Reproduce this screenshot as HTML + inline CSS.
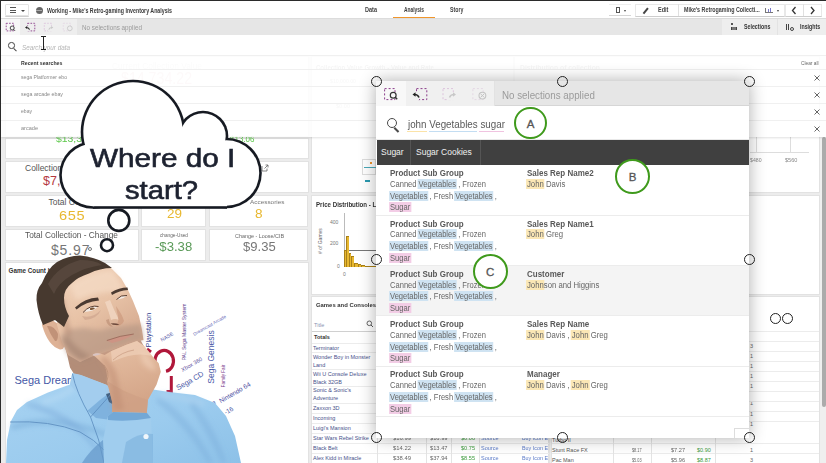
<!DOCTYPE html>
<html><head><meta charset="utf-8">
<style>
*{margin:0;padding:0;box-sizing:border-box}
html,body{width:826px;height:463px;overflow:hidden;background:#fff;font-family:"Liberation Sans",sans-serif;color:#404040}
.a{position:absolute}
#root{position:relative;width:826px;height:463px;overflow:hidden;background:#fff}
.t{position:absolute;white-space:nowrap;line-height:1;transform-origin:0 0}
.b{font-weight:bold}
</style></head><body><div id="root">

<!-- ===== DASHBOARD (background) ===== -->
<!-- DASH START -->
<div id="dash" class="a" style="left:0;top:0;width:826px;height:463px">
<div class="a" style="left:1px;top:55px;width:825px;height:408px;background:#ececec;"></div>
<div class="a" style="left:4.5px;top:56px;width:304px;height:81px;background:#fff;border:1px solid #e2e2e2;"></div>
<div class="a" style="left:311px;top:56px;width:203px;height:137px;background:#fff;border:1px solid #e2e2e2;"></div>
<div class="a" style="left:514px;top:56px;width:306px;height:137px;background:#fff;border:1px solid #e2e2e2;"></div>
<div class="a" style="left:4.5px;top:138px;width:150px;height:21px;background:#fff;border:1px solid #e2e2e2;"></div>
<div class="a" style="left:156.5px;top:138px;width:152px;height:21px;background:#fff;border:1px solid #e2e2e2;"></div>
<div class="a" style="left:4.5px;top:160.5px;width:150px;height:32px;background:#fff;border:1px solid #e2e2e2;"></div>
<div class="a" style="left:156.5px;top:160.5px;width:152px;height:32px;background:#fff;border:1px solid #e2e2e2;"></div>
<div class="a" style="left:4.5px;top:194.5px;width:134.2px;height:32px;background:#fff;border:1px solid #e2e2e2;"></div>
<div class="a" style="left:140.8px;top:194.5px;width:65.6px;height:32px;background:#fff;border:1px solid #e2e2e2;"></div>
<div class="a" style="left:209px;top:194.5px;width:99.3px;height:32px;background:#fff;border:1px solid #e2e2e2;"></div>
<div class="a" style="left:4.5px;top:228.5px;width:134.2px;height:32px;background:#fff;border:1px solid #e2e2e2;"></div>
<div class="a" style="left:140.8px;top:228.5px;width:65.6px;height:32px;background:#fff;border:1px solid #e2e2e2;"></div>
<div class="a" style="left:209px;top:228.5px;width:99.3px;height:32px;background:#fff;border:1px solid #e2e2e2;"></div>
<div class="a" style="left:4.5px;top:262px;width:304px;height:210px;background:#fff;border:1px solid #e2e2e2;"></div>
<div class="a" style="left:311px;top:194.5px;width:206px;height:100px;background:#fff;border:1px solid #e2e2e2;"></div>
<div class="a" style="left:519px;top:194.5px;width:301px;height:100px;background:#fff;border:1px solid #e2e2e2;"></div>
<div class="a" style="left:311px;top:296px;width:238px;height:180px;background:#fff;border:1px solid #e2e2e2;"></div>
<div class="a" style="left:551px;top:296px;width:269px;height:180px;background:#fff;border:1px solid #e2e2e2;"></div>
<div class="a" style="left:820px;top:55px;width:6px;height:408px;background:#efefef;"></div>
<div class="a" style="left:822px;top:137px;width:4px;height:269.5px;background:#ababab;border-radius:2px"></div>
<div class="t" style="left:112px;top:61.4px;font-size:9.5px;color:#d6d6d6;transform:scaleX(0.880);">Current Collection Value</div>
<div class="t" style="left:121px;top:71.1px;font-size:16px;color:#e6c4c6;transform:scaleX(0.887);">$14,734.22</div>
<div class="t" style="left:316px;top:63.7px;font-size:7px;color:#9a9a9a;font-weight:bold;transform:scaleX(0.864);">Collection Value Growth - Value and Rate</div>
<div class="t" style="left:520px;top:63.7px;font-size:7px;color:#9a9a9a;font-weight:bold;transform:scaleX(0.970);">Distribution of collection</div>
<div class="t" style="left:330px;top:77.8px;font-size:6px;color:#aaa;transform:scaleX(0.866);">$10,000.00</div>
<div class="t" style="left:336px;top:103.3px;font-size:6px;color:#aaa;transform:scaleX(0.932);">$0.00</div>
<div class="t" style="left:56.2px;top:134.5px;font-size:9px;color:#5cc84a;transform:scaleX(1.154);">$13,334.16</div>
<div class="t" style="left:229.7px;top:134.7px;font-size:9px;color:#5cc84a;transform:scaleX(0.890);">$13.06</div>
<div class="t" style="left:25px;top:163.7px;font-size:8.5px;color:#555;">Collection Value - Loose</div>
<div class="t" style="left:43px;top:175.3px;font-size:12.5px;color:#b5383e;">$7,394.83</div>
<div class="t" style="left:48.5px;top:198.3px;font-size:8.5px;color:#555;">Total Collection - Games</div>
<div class="t" style="left:59.3px;top:209.8px;font-size:12.8px;color:#e8b830;transform:scaleX(1.142);letter-spacing:0.5px">655</div>
<div class="t" style="left:166.8px;top:207.8px;font-size:12px;color:#e8b830;transform:scaleX(1.123);">29</div>
<div class="t" style="left:249.6px;top:198.6px;font-size:6px;color:#777;transform:scaleX(1.064);">Accessories</div>
<div class="t" style="left:255.4px;top:207.8px;font-size:12px;color:#e8b830;transform:scaleX(1.136);">8</div>
<div class="t" style="left:25.3px;top:231.3px;font-size:8.5px;color:#555;transform:scaleX(0.979);">Total Collection - Change</div>
<div class="t" style="left:50.9px;top:242.7px;font-size:14px;color:#777;letter-spacing:0.9px">$5.97</div>
<div class="t" style="left:160px;top:233.4px;font-size:5px;color:#666;transform:scaleX(0.941);">change-Used</div>
<div class="t" style="left:154.8px;top:239.8px;font-size:13.7px;color:#5a9a58;transform:scaleX(0.958);">-$3.38</div>
<div class="t" style="left:234.7px;top:233.3px;font-size:6px;color:#666;transform:scaleX(0.901);">Change - Loose/CIB</div>
<div class="t" style="left:242.7px;top:239.8px;font-size:13.7px;color:#777;transform:scaleX(0.954);">$9.35</div>
<div class="t" style="left:8.5px;top:267.9px;font-size:6.3px;color:#333;font-weight:bold;">Game Count by Console</div>
<div class="t" style="left:315.7px;top:200.6px;font-size:7px;color:#333;font-weight:bold;transform:scaleX(0.876);">Price Distribution - L</div>
<div class="t" style="left:330px;top:220.4px;font-size:5px;color:#777;">400</div>
<div class="t" style="left:330px;top:241.4px;font-size:5px;color:#777;">200</div>
<div class="t" style="left:337px;top:263.9px;font-size:5px;color:#777;">0</div>
<div class="t" style="left:343px;top:272.4px;font-size:5px;color:#777;">0</div>
<div class="t" style="left:316px;top:302.3px;font-size:6px;color:#333;font-weight:bold;transform:scaleX(0.983);">Games and Consoles</div>
<div class="t" style="left:314px;top:323.4px;font-size:5.5px;color:#8890b0;">Title</div>
<div class="t" style="left:314px;top:334.9px;font-size:5.5px;color:#333;font-weight:bold;">Totals</div>
<div class="t" style="left:749.5px;top:157.9px;font-size:5px;color:#888;transform:scaleX(1.034);">$480</div>
<div class="t" style="left:784.6px;top:157.9px;font-size:5px;color:#888;transform:scaleX(1.115);">$560</div>
<div class="t" style="left:14.5px;top:374.7px;font-size:11px;color:#4457a6;">Sega Dreamcast</div>
<div class="t" style="left:313px;top:345.9px;font-size:5.5px;color:#46508a;">Terminator</div>
<div class="t" style="left:313px;top:354.9px;font-size:5.5px;color:#46508a;">Wonder Boy in Monster</div>
<div class="t" style="left:313px;top:362.9px;font-size:5.5px;color:#46508a;">Land</div>
<div class="t" style="left:313px;top:371.9px;font-size:5.5px;color:#46508a;">Wii U Console Deluxe</div>
<div class="t" style="left:313px;top:379.9px;font-size:5.5px;color:#46508a;">Black 32GB</div>
<div class="t" style="left:313px;top:388.4px;font-size:5.5px;color:#46508a;">Sonic &amp; Sonic&#x27;s</div>
<div class="t" style="left:313px;top:396.4px;font-size:5.5px;color:#46508a;">Adventure</div>
<div class="t" style="left:313px;top:405.9px;font-size:5.5px;color:#46508a;">Zaxxon 3D</div>
<div class="t" style="left:313px;top:415.9px;font-size:5.5px;color:#46508a;">Incoming</div>
<div class="t" style="left:313px;top:425.9px;font-size:5.5px;color:#46508a;">Luigi&#x27;s Mansion</div>
<div class="t" style="left:313px;top:435.9px;font-size:5.5px;color:#46508a;">Star Wars Rebel Strike</div>
<div class="t" style="left:313px;top:445.9px;font-size:5.5px;color:#46508a;">Black Belt</div>
<div class="t" style="left:313px;top:455.9px;font-size:5.5px;color:#46508a;">Alex Kidd in Miracle</div>
<div class="t" style="left:393px;top:436.4px;font-size:5.5px;color:#666;transform:scaleX(1.070);">$16.99</div>
<div class="t" style="left:430px;top:436.4px;font-size:5.5px;color:#666;transform:scaleX(1.040);">$16.99</div>
<div class="t" style="left:461px;top:436.4px;font-size:5.5px;color:#3b9a3b;transform:scaleX(1.017);">$0.00</div>
<div class="t" style="left:480.6px;top:436.4px;font-size:5.5px;color:#5a7ac8;transform:scaleX(1.004);">Source</div>
<div class="t" style="left:522px;top:436.4px;font-size:5.5px;color:#5a7ac8;transform:scaleX(0.977);">Buy Icon E</div>
<div class="t" style="left:393px;top:446.4px;font-size:5.5px;color:#666;transform:scaleX(1.070);">$14.22</div>
<div class="t" style="left:430px;top:446.4px;font-size:5.5px;color:#666;transform:scaleX(1.040);">$13.47</div>
<div class="t" style="left:461px;top:446.4px;font-size:5.5px;color:#3b9a3b;transform:scaleX(1.017);">$0.75</div>
<div class="t" style="left:480.6px;top:446.4px;font-size:5.5px;color:#5a7ac8;transform:scaleX(1.004);">Source</div>
<div class="t" style="left:522px;top:446.4px;font-size:5.5px;color:#5a7ac8;transform:scaleX(0.977);">Buy Icon E</div>
<div class="t" style="left:393px;top:456.4px;font-size:5.5px;color:#666;transform:scaleX(1.070);">$38.49</div>
<div class="t" style="left:430px;top:456.4px;font-size:5.5px;color:#666;transform:scaleX(1.040);">$37.94</div>
<div class="t" style="left:461px;top:456.4px;font-size:5.5px;color:#3b9a3b;transform:scaleX(1.017);">$8.55</div>
<div class="t" style="left:480.6px;top:456.4px;font-size:5.5px;color:#5a7ac8;transform:scaleX(1.004);">Source</div>
<div class="t" style="left:522px;top:456.4px;font-size:5.5px;color:#5a7ac8;transform:scaleX(0.977);">Buy Icon E</div>
<div class="t" style="left:552px;top:437.9px;font-size:5.5px;color:#555;">Turbo II</div>
<div class="t" style="left:552px;top:447.9px;font-size:5.5px;color:#555;">Stunt Race FX</div>
<div class="t" style="left:552px;top:457.9px;font-size:5.5px;color:#555;">Pac Man</div>
<div class="t" style="left:631.7px;top:447.9px;font-size:5.5px;color:#666;transform:scaleX(0.690);">$8.17</div>
<div class="t" style="left:671px;top:447.9px;font-size:5.5px;color:#666;transform:scaleX(1.017);">$7.27</div>
<div class="t" style="left:697px;top:447.9px;font-size:5.5px;color:#3b9a3b;">$0.90</div>
<div class="t" style="left:631.7px;top:457.9px;font-size:5.5px;color:#666;transform:scaleX(0.690);">$5.03</div>
<div class="t" style="left:671px;top:457.9px;font-size:5.5px;color:#666;transform:scaleX(1.017);">$5.96</div>
<div class="t" style="left:697px;top:457.9px;font-size:5.5px;color:#3b9a3b;">$8.87</div>
<div class="t" style="left:750px;top:344.4px;font-size:5.5px;color:#666;">3</div>
<div class="t" style="left:750px;top:354.4px;font-size:5.5px;color:#666;">1</div>
<div class="t" style="left:750px;top:364.4px;font-size:5.5px;color:#666;">1</div>
<div class="t" style="left:750px;top:374.4px;font-size:5.5px;color:#666;">1</div>
<div class="t" style="left:750px;top:384.4px;font-size:5.5px;color:#666;">1</div>
<div class="t" style="left:750px;top:401.4px;font-size:5.5px;color:#666;">1</div>
<div class="t" style="left:750px;top:411.9px;font-size:5.5px;color:#666;">1</div>
<div class="t" style="left:750px;top:421.9px;font-size:5.5px;color:#666;">1</div>
<div class="t" style="left:750px;top:447.9px;font-size:5.5px;color:#666;">1</div>
<div class="t" style="left:750px;top:457.9px;font-size:5.5px;color:#666;">3</div>
<div class="a" style="left:148px;top:329.5px;width:0;height:0"><div class="t" style="left:0;top:0;font-size:7px;color:#2e3c8e;transform:translate(-50%,-50%) rotate(-90deg);transform-origin:50% 50%;">Playstation</div></div>
<div class="a" style="left:167px;top:336.5px;width:0;height:0"><div class="t" style="left:0;top:0;font-size:5px;color:#5a5aa8;transform:translate(-50%,-50%) rotate(-30deg);transform-origin:50% 50%;">NASE</div></div>
<div class="a" style="left:183.6px;top:331.7px;width:0;height:0"><div class="t" style="left:0;top:0;font-size:5px;color:#5a3a8a;transform:translate(-50%,-50%) rotate(-90deg);transform-origin:50% 50%;">PAL Sega Master System</div></div>
<div class="a" style="left:210px;top:326px;width:0;height:0"><div class="t" style="left:0;top:0;font-size:4.5px;color:#6a6ab8;transform:translate(-50%,-50%) rotate(-30deg);transform-origin:50% 50%;">Dreamcast Arcade</div></div>
<div class="a" style="left:211px;top:357px;width:0;height:0"><div class="t" style="left:0;top:0;font-size:8.5px;color:#4a5aa8;transform:translate(-50%,-50%) rotate(-90deg);transform-origin:50% 50%;">Sega Genesis</div></div>
<div class="a" style="left:191.8px;top:365px;width:0;height:0"><div class="t" style="left:0;top:0;font-size:5.5px;color:#5a4a9a;transform:translate(-50%,-50%) rotate(-30deg);transform-origin:50% 50%;">Xbox 360</div></div>
<div class="a" style="left:190.4px;top:380.5px;width:0;height:0"><div class="t" style="left:0;top:0;font-size:7.5px;color:#4a5aa8;transform:translate(-50%,-50%) rotate(-30deg);transform-origin:50% 50%;">Sega CD</div></div>
<div class="a" style="left:223.6px;top:376px;width:0;height:0"><div class="t" style="left:0;top:0;font-size:4.5px;color:#7a3a8a;transform:translate(-50%,-50%) rotate(-90deg);transform-origin:50% 50%;">Family Fair</div></div>
<div class="a" style="left:234.5px;top:392.7px;width:0;height:0"><div class="t" style="left:0;top:0;font-size:6.5px;color:#4a4aa0;transform:translate(-50%,-50%) rotate(-30deg);transform-origin:50% 50%;">Nintendo 64</div></div>
<div class="a" style="left:229px;top:411px;width:0;height:0"><div class="t" style="left:0;top:0;font-size:6.5px;color:#4a5aa8;transform:translate(-50%,-50%) rotate(-30deg);transform-origin:50% 50%;">-16</div></div>
<div class="a" style="left:213.6px;top:403px;width:0;height:0"><div class="t" style="left:0;top:0;font-size:6.5px;color:#4a5aa8;transform:translate(-50%,-50%) rotate(-30deg);transform-origin:50% 50%;">e</div></div>
<svg class="a" style="left:0;top:0" width="826" height="463"><path d="M156,366 A9.3,10.5 0 1 1 166,371.3" fill="none" stroke="#b0173a" stroke-width="3.2"/><path d="M171.3,376 L171.3,391.5 L166.5,391.5" fill="none" stroke="#b0173a" stroke-width="3"/><path d="M147,349 L151,352" stroke="#b0173a" stroke-width="3"/></svg>
<div class="a" style="left:343.7px;top:212.6px;width:1px;height:54.6px;background:#bbb"></div>
<div class="a" style="left:343.5px;top:250px;width:2.8px;height:17.19999999999999px;background:#e8b830;border-left:0.5px solid #a8801a;border-top:0.5px solid #a8801a"></div>
<div class="a" style="left:346.1px;top:235.7px;width:2.8px;height:31.5px;background:#e8b830;border-left:0.5px solid #a8801a;border-top:0.5px solid #a8801a"></div>
<div class="a" style="left:348.7px;top:252.5px;width:2.3px;height:14.699999999999989px;background:#e8b830;border-left:0.5px solid #a8801a;border-top:0.5px solid #a8801a"></div>
<div class="a" style="left:350.8px;top:256.4px;width:3.3px;height:10.800000000000011px;background:#e8b830;border-left:0.5px solid #a8801a;border-top:0.5px solid #a8801a"></div>
<div class="a" style="left:353.9px;top:263.4px;width:3.8px;height:3.8000000000000114px;background:#e8b830;border-left:0.5px solid #a8801a;border-top:0.5px solid #a8801a"></div>
<div class="a" style="left:357.5px;top:264.2px;width:3.6px;height:3.0px;background:#e8b830;border-left:0.5px solid #a8801a;border-top:0.5px solid #a8801a"></div>
<div class="a" style="left:360.9px;top:265px;width:4.1px;height:2.1999999999999886px;background:#e8b830;border-left:0.5px solid #a8801a;border-top:0.5px solid #a8801a"></div>
<div class="a" style="left:364.8px;top:265.8px;width:11px;height:1.3999999999999773px;background:#e8b830;border-left:0.5px solid #a8801a;border-top:0.5px solid #a8801a"></div>
<div class="a" style="left:349px;top:250px;width:27px;height:1px;background:#777"></div>
<div class="t" style="left:318px;top:254px;font-size:5px;color:#666;transform:rotate(-90deg)"># of Games</div>
<div class="a" style="left:362px;top:158.5px;width:14px;height:16px;border:1px solid #ddd;background:#fff"></div>
<div class="a" style="left:364px;top:167px;width:12px;height:1px;background:#4aa8b8"></div>
<div class="a" style="left:370px;top:162px;width:2px;height:2px;background:#f0962c"></div>
<div class="a" style="left:365px;top:180px;width:5px;height:2px;background:#2a9ab0"></div>
<div class="a" style="left:750px;top:152px;width:59px;height:1px;background:#ddd"></div>
<div class="a" style="left:755.5px;top:137px;width:1px;height:15px;background:#ddd"></div>
<div class="a" style="left:790.4px;top:137px;width:1px;height:15px;background:#ddd"></div>
<div class="a" style="left:769.5px;top:313px;width:11px;height:11px;border:1.2px solid #222;border-radius:50%"></div>
<div class="a" style="left:781.5px;top:313px;width:11px;height:11px;border:1.2px solid #222;border-radius:50%"></div>
<div class="a" style="left:312px;top:331px;width:237px;height:1px;background:#ececec"></div>
<div class="a" style="left:312px;top:343px;width:237px;height:1px;background:#ececec"></div>
<div class="a" style="left:312px;top:352px;width:237px;height:1px;background:#ececec"></div>
<div class="a" style="left:312px;top:369px;width:237px;height:1px;background:#ececec"></div>
<div class="a" style="left:312px;top:386px;width:237px;height:1px;background:#ececec"></div>
<div class="a" style="left:312px;top:403px;width:237px;height:1px;background:#ececec"></div>
<div class="a" style="left:312px;top:413px;width:237px;height:1px;background:#ececec"></div>
<div class="a" style="left:312px;top:423px;width:237px;height:1px;background:#ececec"></div>
<div class="a" style="left:312px;top:433px;width:237px;height:1px;background:#ececec"></div>
<div class="a" style="left:312px;top:443px;width:237px;height:1px;background:#ececec"></div>
<div class="a" style="left:312px;top:453px;width:237px;height:1px;background:#ececec"></div>
<div class="a" style="left:312px;top:331px;width:237px;height:1px;background:#d0d0d0"></div>
<div class="a" style="left:552px;top:331px;width:267px;height:1px;background:#ececec"></div>
<div class="a" style="left:552px;top:341px;width:267px;height:1px;background:#ececec"></div>
<div class="a" style="left:552px;top:351px;width:267px;height:1px;background:#ececec"></div>
<div class="a" style="left:552px;top:361px;width:267px;height:1px;background:#ececec"></div>
<div class="a" style="left:552px;top:371px;width:267px;height:1px;background:#ececec"></div>
<div class="a" style="left:552px;top:381px;width:267px;height:1px;background:#ececec"></div>
<div class="a" style="left:552px;top:391px;width:267px;height:1px;background:#ececec"></div>
<div class="a" style="left:552px;top:401px;width:267px;height:1px;background:#ececec"></div>
<div class="a" style="left:552px;top:411px;width:267px;height:1px;background:#ececec"></div>
<div class="a" style="left:552px;top:421px;width:267px;height:1px;background:#ececec"></div>
<div class="a" style="left:552px;top:443px;width:267px;height:1px;background:#ececec"></div>
<div class="a" style="left:552px;top:453px;width:267px;height:1px;background:#ececec"></div>
<div class="a" style="left:377.3px;top:438px;width:1px;height:25px;background:#e4e4e4"></div>
<div class="a" style="left:425.7px;top:438px;width:1px;height:25px;background:#e4e4e4"></div>
<div class="a" style="left:451px;top:438px;width:1px;height:25px;background:#e4e4e4"></div>
<div class="a" style="left:479px;top:438px;width:1px;height:25px;background:#e4e4e4"></div>
<div class="a" style="left:549px;top:438px;width:1px;height:25px;background:#e4e4e4"></div>
<div class="a" style="left:612.7px;top:438px;width:1px;height:25px;background:#e4e4e4"></div>
<div class="a" style="left:650.7px;top:438px;width:1px;height:25px;background:#e4e4e4"></div>
<div class="a" style="left:714.7px;top:438px;width:1px;height:25px;background:#e4e4e4"></div>
<svg class="a" style="left:366px;top:320px" width="8" height="8"><circle cx="3.3" cy="3.3" r="2.3" fill="none" stroke="#555" stroke-width="0.9"/><path d="M5,5 L7,7" stroke="#555" stroke-width="1"/></svg>
<div class="a" style="left:87.6px;top:246.5px;width:4.4px;height:4.4px;border:1px solid #777;border-radius:50%"></div>
<svg class="a" style="left:261px;top:164px" width="8" height="8"><path d="M1,2 L1,7 L6,7 L6,4.5 M3.5,4.5 L7,1 M4.5,1 L7,1 L7,3.5" fill="none" stroke="#666" stroke-width="0.8"/></svg>
<div class="a" style="left:1px;top:55px;width:825px;height:82px;background:rgba(255,255,255,0.9);box-shadow:0 1px 2px rgba(0,0,0,0.12)"></div>
<div class="a" style="left:1px;top:68.5px;width:825px;height:1px;background:#f0f0f0"></div>
<div class="a" style="left:1px;top:85.6px;width:825px;height:1px;background:#f0f0f0"></div>
<div class="a" style="left:1px;top:102.5px;width:825px;height:1px;background:#f0f0f0"></div>
<div class="a" style="left:1px;top:119.5px;width:825px;height:1px;background:#f0f0f0"></div>
<div class="t" style="left:20.6px;top:59.8px;font-size:6px;color:#333;font-weight:bold;transform:scaleX(0.868);">Recent searches</div>
<div class="t" style="left:20.6px;top:73.8px;font-size:6px;color:#888;transform:scaleX(0.851);">sega Platformer ebo</div>
<div class="t" style="left:20.6px;top:90.8px;font-size:6px;color:#888;transform:scaleX(0.880);">sega arcade ebay</div>
<div class="t" style="left:20.6px;top:107.8px;font-size:6px;color:#888;transform:scaleX(0.845);">ebay</div>
<div class="t" style="left:20.6px;top:124.8px;font-size:6px;color:#888;transform:scaleX(0.926);">arcade</div>
<div class="t" style="left:801px;top:60.0px;font-size:6px;color:#666;transform:scaleX(0.795);">Clear all</div>
<svg class="a" style="left:813.5px;top:74.7px" width="6" height="6"><path d="M0.5,0.5 L5.5,5.5 M5.5,0.5 L0.5,5.5" stroke="#555" stroke-width="0.9"/></svg>
<svg class="a" style="left:813.5px;top:91.9px" width="6" height="6"><path d="M0.5,0.5 L5.5,5.5 M5.5,0.5 L0.5,5.5" stroke="#555" stroke-width="0.9"/></svg>
<svg class="a" style="left:813.5px;top:109.0px" width="6" height="6"><path d="M0.5,0.5 L5.5,5.5 M5.5,0.5 L0.5,5.5" stroke="#555" stroke-width="0.9"/></svg>
<svg class="a" style="left:813.5px;top:126.30000000000001px" width="6" height="6"><path d="M0.5,0.5 L5.5,5.5 M5.5,0.5 L0.5,5.5" stroke="#555" stroke-width="0.9"/></svg>
</div>
<!-- DASH END -->

<!-- ===== HEADER ===== -->
<div class="a" style="left:0;top:0;width:826px;height:18px;background:#fff"></div>
<div class="a" style="left:0;top:0;width:826px;height:1px;background:#2b2b2b"></div>
<div class="a" style="left:0;top:0;width:1.3px;height:463px;background:#2b2b2b;z-index:50"></div>
<div class="a" style="left:1px;top:18px;width:825px;height:1px;background:#dcdcdc"></div>
<!-- hamburger btn -->
<div class="a" style="left:5px;top:4px;width:24px;height:12px;border:1px solid #e3e3e3;border-radius:1px;box-shadow:0 1px 0 #cfcfcf"></div>
<div class="a" style="left:10px;top:7px;width:6px;height:1px;background:#555"></div>
<div class="a" style="left:10px;top:9.5px;width:6px;height:1px;background:#555"></div>
<div class="a" style="left:10px;top:12px;width:6px;height:1px;background:#555"></div>
<div class="a" style="left:20.5px;top:9.5px;width:0;height:0;border-left:2px solid transparent;border-right:2px solid transparent;border-top:2.5px solid #444"></div>
<!-- globe -->
<div class="a" style="left:35.5px;top:6.5px;width:7px;height:7px;border-radius:50%;background:#666"></div>
<div class="a" style="left:36px;top:9.5px;width:6px;height:1px;background:#aaa"></div>
<div class="t b" style="left:47px;top:7px;font-size:7px;color:#3a3a3a;transform:scaleX(0.75)">Working - Mike's Retro-gaming Inventory Analysis</div>
<!-- tabs -->
<div class="t b" style="left:365px;top:6.5px;font-size:6.5px;color:#404040;transform:scaleX(0.85)">Data</div>
<div class="t b" style="left:404px;top:6.5px;font-size:6.5px;color:#404040;transform:scaleX(0.75)">Analysis</div>
<div class="t b" style="left:450px;top:6.5px;font-size:6.5px;color:#404040;transform:scaleX(0.8)">Story</div>
<div class="a" style="left:393px;top:16.5px;width:42px;height:1.5px;background:#f0962c"></div>
<!-- right buttons -->
<div class="a" style="left:609px;top:4px;width:22px;height:12px;border-bottom:1px solid #d5d5d5;border-top:1px solid #eee"></div>
<div class="a" style="left:616px;top:6.5px;width:4px;height:6px;border:1px solid #555"></div>
<div class="a" style="left:623.5px;top:9.5px;width:0;height:0;border-left:1.5px solid transparent;border-right:1.5px solid transparent;border-top:2px solid #444"></div>
<div class="a" style="left:635px;top:4px;width:150px;height:12.5px;border:1px solid #e8e8e8;border-bottom:1px solid #cdcdcd"></div>
<div class="a" style="left:678px;top:4px;width:1px;height:12px;background:#e0e0e0"></div>
<div class="a" style="left:642px;top:10px;width:7px;height:1.5px;background:#444;transform:rotate(-50deg)"></div>
<div class="t b" style="left:658px;top:7px;font-size:6.5px;color:#444;transform:scaleX(0.85)">Edit</div>
<div class="t b" style="left:684px;top:7px;font-size:6.5px;color:#404040;transform:scaleX(0.82)">Mike's Retrogaming Collecti...</div>
<div class="a" style="left:765px;top:8px;width:8px;height:5px;border-left:1px solid #777;border-bottom:1px solid #777"></div>
<div class="a" style="left:768px;top:9px;width:1px;height:3px;background:#7a7acc"></div>
<div class="a" style="left:770px;top:8px;width:1px;height:4px;background:#7a7acc"></div>
<div class="a" style="left:777px;top:9.5px;width:0;height:0;border-left:1.5px solid transparent;border-right:1.5px solid transparent;border-top:2px solid #444"></div>
<div class="a" style="left:785px;top:4px;width:37px;height:12.5px;border:1px solid #e8e8e8;border-bottom:1px solid #cdcdcd"></div>
<div class="a" style="left:803px;top:4px;width:1px;height:12px;background:#e0e0e0"></div>
<svg class="a" style="left:790px;top:6px" width="30" height="9"><path d="M5.5,1 L2.5,4.5 L5.5,8" fill="none" stroke="#333" stroke-width="1.3"/><path d="M21,1 L24,4.5 L21,8" fill="none" stroke="#333" stroke-width="1.3"/></svg>

<!-- ===== TOOLBAR ===== -->
<div class="a" style="left:1px;top:19px;width:825px;height:16px;background:#e6e6e6"></div>
<div class="a" style="left:1px;top:19px;width:19px;height:16px;background:#f7f7f7"></div>
<div class="a" style="left:20px;top:19px;width:57px;height:16px;background:#eeeeee"></div>
<div class="a" style="left:722px;top:19px;width:104px;height:16px;background:#eeeeee"></div>
<div class="a" style="left:777px;top:19px;width:1px;height:16px;background:#e3e3e3"></div>
<!-- icons -->
<svg class="a" style="left:0;top:19px" width="80" height="16" viewBox="0 0 80 16">
  <rect x="6.2" y="4.3" width="7.4" height="7.6" fill="none" stroke="#8b3d8b" stroke-width="0.9" stroke-dasharray="1.6 1.3"/>
  <circle cx="12.2" cy="9" r="2" fill="#f7f7f7" stroke="#333" stroke-width="0.9"/>
  <path d="M13.6,10.4 L15,11.8" stroke="#333" stroke-width="1"/>
  <rect x="27.6" y="4.3" width="7.2" height="7.6" fill="none" stroke="#8b3d8b" stroke-width="0.9" stroke-dasharray="1.6 1.3"/>
  <rect x="24.5" y="6.8" width="5" height="5.5" fill="#eeeeee"/>
  <path d="M29.5,10.6 Q29,8.5 26.5,8.5" fill="none" stroke="#222" stroke-width="1.1"/>
  <path d="M25,8.5 L27.2,6.9 L27.2,10.1 Z" fill="#222"/>
  <rect x="44.3" y="4.3" width="7.2" height="7.6" fill="none" stroke="#dcc4dc" stroke-width="0.9" stroke-dasharray="1.6 1.3"/>
  <rect x="48" y="6.8" width="5.5" height="5.5" fill="#eeeeee"/>
  <path d="M48.8,10.6 Q49.3,8.5 51.8,8.5" fill="none" stroke="#c8c8c8" stroke-width="1.1"/>
  <path d="M53.3,8.5 L51.1,6.9 L51.1,10.1 Z" fill="#c8c8c8"/>
  <rect x="63.3" y="4.3" width="7.2" height="7.6" fill="none" stroke="#e4d8e4" stroke-width="0.9" stroke-dasharray="1.6 1.3"/>
  <circle cx="69.8" cy="9.3" r="2.4" fill="#eeeeee" stroke="#c4c4c4" stroke-width="0.8"/>
</svg>
<div class="t" style="left:82px;top:24px;font-size:7px;color:#9a9a9a;transform:scaleX(0.9)">No selections applied</div>
<!-- selections icon -->
<div class="a" style="left:731px;top:23px;width:1.5px;height:2px;background:#555"></div>
<div class="a" style="left:731px;top:27px;width:6px;height:3px;border-left:1.5px solid #444;border-right:1.5px solid #444;background:#777"></div>
<div class="t b" style="left:744px;top:24px;font-size:6.5px;color:#333;transform:scaleX(0.81)">Selections</div>
<div class="a" style="left:786px;top:23.5px;width:1px;height:6px;background:#444"></div>
<div class="a" style="left:788px;top:23.5px;width:1px;height:6px;background:#444"></div>
<div class="a" style="left:790px;top:26.5px;width:4px;height:4px;border:1px solid #444;border-radius:50%"></div>
<div class="t b" style="left:800px;top:24px;font-size:6.5px;color:#333;transform:scaleX(0.81)">Insights</div>

<!-- ===== SEARCH ROW ===== -->
<div class="a" style="left:1px;top:35px;width:825px;height:20px;background:#fff"></div>
<div class="a" style="left:8px;top:42px;width:6.5px;height:6.5px;border:1.2px solid #444;border-radius:50%"></div>
<div class="a" style="left:13.5px;top:48px;width:3.5px;height:1.3px;background:#444;transform:rotate(45deg);transform-origin:0 0"></div>
<div class="t" style="left:22px;top:43.5px;font-size:7px;color:#b5b5b5;font-style:italic;transform:scaleX(0.9)">Search your data</div>
<!-- I-beam cursor -->
<div class="a" style="left:42.5px;top:36px;width:1.2px;height:14px;background:#222"></div>
<div class="a" style="left:40.5px;top:36px;width:5px;height:1px;background:#222"></div>
<div class="a" style="left:40.5px;top:49px;width:5px;height:1px;background:#222"></div>
<div class="a" style="left:1px;top:54.5px;width:825px;height:1px;background:#f0f0f0"></div>

<!-- ===== POPUP ===== -->
<div class="a" style="left:376px;top:81px;width:373px;height:357px;background:#fff;box-shadow:0 0 16px rgba(0,0,0,0.32);z-index:20;overflow:hidden">
  <!-- toolbar -->
  <div class="a" style="left:0;top:0;width:373px;height:25px;background:#e6e6e6;border-bottom:1px solid #d6d6d6"></div>
  <div class="a" style="left:0;top:0;width:29.5px;height:25px;background:#f8f8f8"></div>
  <div class="a" style="left:29.5px;top:0;width:89px;height:25px;background:#f0f0f0;border-right:1px solid #e2e2e2"></div>
  <!-- popup toolbar icons -->
  <svg class="a" style="left:0;top:0" width="120" height="25" viewBox="0 0 120 25">
    <rect x="8.6" y="7.6" width="10.4" height="11" fill="none" stroke="#8b3d8b" stroke-width="1" stroke-dasharray="2 2"/>
    <circle cx="17.2" cy="14.2" r="2.9" fill="#f8f8f8" stroke="#333" stroke-width="1.2"/>
    <path d="M19.3,16.3 L21.2,18.2" stroke="#333" stroke-width="1.4"/>
    <rect x="40.5" y="7.6" width="10.3" height="11" fill="none" stroke="#8b3d8b" stroke-width="1" stroke-dasharray="2 2"/>
    <rect x="36" y="11" width="7" height="8" fill="#f0f0f0"/>
    <path d="M43,16.5 Q42,13.5 38.5,13.5" fill="none" stroke="#222" stroke-width="1.5"/>
    <path d="M36.5,13.5 L39.5,11.2 L39.5,15.8 Z" fill="#222"/>
    <rect x="67" y="7.6" width="10.3" height="11" fill="none" stroke="#dcc4dc" stroke-width="1" stroke-dasharray="2 2"/>
    <rect x="72" y="11" width="8" height="8" fill="#f0f0f0"/>
    <path d="M73.5,16.5 Q74.5,13.5 78,13.5" fill="none" stroke="#c8c8c8" stroke-width="1.5"/>
    <path d="M80,13.5 L77,11.2 L77,15.8 Z" fill="#c8c8c8"/>
    <rect x="96.9" y="7.6" width="10.3" height="11" fill="none" stroke="#e4d8e4" stroke-width="1" stroke-dasharray="2 2"/>
    <circle cx="106.4" cy="14.6" r="3.4" fill="#f0f0f0" stroke="#c4c4c4" stroke-width="1.1"/>
    <path d="M104.6,12.8 L108.2,16.4 M108.2,12.8 L104.6,16.4" stroke="#c4c4c4" stroke-width="1"/>
  </svg>
  <div class="t" style="left:125.5px;top:9px;font-size:10.5px;color:#9b9b9b;transform:scaleX(0.93)">No selections applied</div>
  <!-- search row -->
  <div class="a" style="left:10.8px;top:36.5px;width:10.5px;height:10.5px;border:1.9px solid #4a4a4a;border-radius:50%"></div>
  <div class="a" style="left:19.3px;top:45.5px;width:5.5px;height:2.2px;background:#4a4a4a;transform:rotate(45deg);transform-origin:0 0"></div>
  <div class="t" style="left:31.5px;top:37.5px;font-size:11px;color:#595959;transform:scaleX(0.89)">john Vegetables sugar</div>
  <div class="a" style="left:31px;top:49.5px;width:20px;height:1.5px;background:#fbe3a8"></div>
  <div class="a" style="left:53px;top:49.5px;width:48px;height:1.5px;background:#c3ddf2"></div>
  <div class="a" style="left:103px;top:49.5px;width:25px;height:1.5px;background:#f0c3e0"></div>
  <div class="a" style="left:0;top:57.8px;width:373px;height:1px;background:#e8e8e8"></div>
  <!-- dark bar -->
  <div class="a" style="left:1px;top:58.8px;width:372px;height:25px;background:#404040"></div>
  <div class="a" style="left:34px;top:58.8px;width:1px;height:25px;background:#555"></div>
  <div class="a" style="left:103.5px;top:58.8px;width:1px;height:25px;background:#555"></div>
  <div class="t" style="left:5px;top:67px;font-size:8.5px;color:#f0f0f0">Sugar</div>
  <div class="t" style="left:40px;top:67px;font-size:8.5px;color:#f0f0f0">Sugar Cookies</div>
  <!-- rows -->
  <div id="rows" class="a" style="left:0;top:84px;width:373px;height:273px"><div class="a" style="left:0;top:49.8px;width:373px;height:1px;background:#ececec"></div>
<div class="t b" style="left:13.5px;top:4.2px;font-size:8.5px;color:#595959;transform:scaleX(0.94)">Product Sub Group</div>
<div class="t b" style="left:150.5px;top:4.2px;font-size:8.5px;color:#595959;transform:scaleX(0.94)">Sales Rep Name2</div>
<div class="t" style="left:13.5px;top:14.0px;font-size:8.5px;line-height:10px;color:#666;transform:scaleX(0.89)">Canned&nbsp;<span style="display:inline-block;background:#cfe3f2;padding:0 1px;margin:0 -1px">Vegetables</span>&nbsp;,&nbsp;Frozen</div>
<div class="t" style="left:13.5px;top:25.7px;font-size:8.5px;line-height:10px;color:#666;transform:scaleX(0.89)"><span style="display:inline-block;background:#cfe3f2;padding:0 1px;margin:0 -1px">Vegetables</span>&nbsp;,&nbsp;Fresh&nbsp;<span style="display:inline-block;background:#cfe3f2;padding:0 1px;margin:0 -1px">Vegetables</span>&nbsp;,</div>
<div class="t" style="left:13.5px;top:37.4px;font-size:8.5px;line-height:10px;color:#666;transform:scaleX(0.89)"><span style="display:inline-block;background:#f3cde6;padding:0 1px;margin:0 -1px">Sugar</span></div>
<div class="t" style="left:150.5px;top:14.0px;font-size:8.5px;line-height:10px;color:#666;transform:scaleX(0.91)"><span style="display:inline-block;background:#fbe7b5;padding:0 1px;margin:0 -1px">John</span>&nbsp;Davis</div>
<div class="a" style="left:0;top:100.1px;width:373px;height:1px;background:#ececec"></div>
<div class="t b" style="left:13.5px;top:54.5px;font-size:8.5px;color:#595959;transform:scaleX(0.94)">Product Sub Group</div>
<div class="t b" style="left:150.5px;top:54.5px;font-size:8.5px;color:#595959;transform:scaleX(0.94)">Sales Rep Name1</div>
<div class="t" style="left:13.5px;top:64.3px;font-size:8.5px;line-height:10px;color:#666;transform:scaleX(0.89)">Canned&nbsp;<span style="display:inline-block;background:#cfe3f2;padding:0 1px;margin:0 -1px">Vegetables</span>&nbsp;,&nbsp;Frozen</div>
<div class="t" style="left:13.5px;top:76.0px;font-size:8.5px;line-height:10px;color:#666;transform:scaleX(0.89)"><span style="display:inline-block;background:#cfe3f2;padding:0 1px;margin:0 -1px">Vegetables</span>&nbsp;,&nbsp;Fresh&nbsp;<span style="display:inline-block;background:#cfe3f2;padding:0 1px;margin:0 -1px">Vegetables</span>&nbsp;,</div>
<div class="t" style="left:13.5px;top:87.7px;font-size:8.5px;line-height:10px;color:#666;transform:scaleX(0.89)"><span style="display:inline-block;background:#f3cde6;padding:0 1px;margin:0 -1px">Sugar</span></div>
<div class="t" style="left:150.5px;top:64.3px;font-size:8.5px;line-height:10px;color:#666;transform:scaleX(0.91)"><span style="display:inline-block;background:#fbe7b5;padding:0 1px;margin:0 -1px">John</span>&nbsp;Greg</div>
<div class="a" style="left:0;top:100.6px;width:373px;height:50.3px;background:#f4f4f4"></div>
<div class="a" style="left:0;top:150.4px;width:373px;height:1px;background:#ececec"></div>
<div class="t b" style="left:13.5px;top:104.8px;font-size:8.5px;color:#595959;transform:scaleX(0.94)">Product Sub Group</div>
<div class="t b" style="left:150.5px;top:104.8px;font-size:8.5px;color:#595959;transform:scaleX(0.94)">Customer</div>
<div class="t" style="left:13.5px;top:114.6px;font-size:8.5px;line-height:10px;color:#666;transform:scaleX(0.89)">Canned&nbsp;<span style="display:inline-block;background:#cfe3f2;padding:0 1px;margin:0 -1px">Vegetables</span>&nbsp;,&nbsp;Frozen</div>
<div class="t" style="left:13.5px;top:126.3px;font-size:8.5px;line-height:10px;color:#666;transform:scaleX(0.89)"><span style="display:inline-block;background:#cfe3f2;padding:0 1px;margin:0 -1px">Vegetables</span>&nbsp;,&nbsp;Fresh&nbsp;<span style="display:inline-block;background:#cfe3f2;padding:0 1px;margin:0 -1px">Vegetables</span>&nbsp;,</div>
<div class="t" style="left:13.5px;top:138.0px;font-size:8.5px;line-height:10px;color:#666;transform:scaleX(0.89)"><span style="display:inline-block;background:#f3cde6;padding:0 1px;margin:0 -1px">Sugar</span></div>
<div class="t" style="left:150.5px;top:114.6px;font-size:8.5px;line-height:10px;color:#666;transform:scaleX(0.91)"><span style="display:inline-block;background:#fbe7b5;padding:0 1px;margin:0 -1px">John</span>son&nbsp;and&nbsp;Higgins</div>
<div class="a" style="left:0;top:200.7px;width:373px;height:1px;background:#ececec"></div>
<div class="t b" style="left:13.5px;top:155.1px;font-size:8.5px;color:#595959;transform:scaleX(0.94)">Product Sub Group</div>
<div class="t b" style="left:150.5px;top:155.1px;font-size:8.5px;color:#595959;transform:scaleX(0.94)">Sales Rep Name</div>
<div class="t" style="left:13.5px;top:164.9px;font-size:8.5px;line-height:10px;color:#666;transform:scaleX(0.89)">Canned&nbsp;<span style="display:inline-block;background:#cfe3f2;padding:0 1px;margin:0 -1px">Vegetables</span>&nbsp;,&nbsp;Frozen</div>
<div class="t" style="left:13.5px;top:176.6px;font-size:8.5px;line-height:10px;color:#666;transform:scaleX(0.89)"><span style="display:inline-block;background:#cfe3f2;padding:0 1px;margin:0 -1px">Vegetables</span>&nbsp;,&nbsp;Fresh&nbsp;<span style="display:inline-block;background:#cfe3f2;padding:0 1px;margin:0 -1px">Vegetables</span>&nbsp;,</div>
<div class="t" style="left:13.5px;top:188.3px;font-size:8.5px;line-height:10px;color:#666;transform:scaleX(0.89)"><span style="display:inline-block;background:#f3cde6;padding:0 1px;margin:0 -1px">Sugar</span></div>
<div class="t" style="left:150.5px;top:164.9px;font-size:8.5px;line-height:10px;color:#666;transform:scaleX(0.91)"><span style="display:inline-block;background:#fbe7b5;padding:0 1px;margin:0 -1px">John</span>&nbsp;Davis&nbsp;,&nbsp;<span style="display:inline-block;background:#fbe7b5;padding:0 1px;margin:0 -1px">John</span>&nbsp;Greg</div>
<div class="a" style="left:0;top:251.0px;width:373px;height:1px;background:#ececec"></div>
<div class="t b" style="left:13.5px;top:205.4px;font-size:8.5px;color:#595959;transform:scaleX(0.94)">Product Sub Group</div>
<div class="t b" style="left:150.5px;top:205.4px;font-size:8.5px;color:#595959;transform:scaleX(0.94)">Manager</div>
<div class="t" style="left:13.5px;top:215.2px;font-size:8.5px;line-height:10px;color:#666;transform:scaleX(0.89)">Canned&nbsp;<span style="display:inline-block;background:#cfe3f2;padding:0 1px;margin:0 -1px">Vegetables</span>&nbsp;,&nbsp;Frozen</div>
<div class="t" style="left:13.5px;top:226.9px;font-size:8.5px;line-height:10px;color:#666;transform:scaleX(0.89)"><span style="display:inline-block;background:#cfe3f2;padding:0 1px;margin:0 -1px">Vegetables</span>&nbsp;,&nbsp;Fresh&nbsp;<span style="display:inline-block;background:#cfe3f2;padding:0 1px;margin:0 -1px">Vegetables</span>&nbsp;,</div>
<div class="t" style="left:13.5px;top:238.6px;font-size:8.5px;line-height:10px;color:#666;transform:scaleX(0.89)"><span style="display:inline-block;background:#f3cde6;padding:0 1px;margin:0 -1px">Sugar</span></div>
<div class="t" style="left:150.5px;top:215.2px;font-size:8.5px;line-height:10px;color:#666;transform:scaleX(0.91)"><span style="display:inline-block;background:#fbe7b5;padding:0 1px;margin:0 -1px">John</span>&nbsp;Davis&nbsp;,&nbsp;<span style="display:inline-block;background:#fbe7b5;padding:0 1px;margin:0 -1px">John</span>&nbsp;Greg</div>
<div class="a" style="left:358px;top:263px;width:15px;height:10px;border:1px solid #ddd;border-right:none;border-bottom:none"></div></div>
</div>

<!-- handles -->
<div class="a" style="left:371.0px;top:75.5px;width:11px;height:11px;border:1.3px solid #222;border-radius:50%;z-index:30"></div>
<div class="a" style="left:557.0px;top:75.5px;width:11px;height:11px;border:1.3px solid #222;border-radius:50%;z-index:30"></div>
<div class="a" style="left:743.5px;top:75.5px;width:11px;height:11px;border:1.3px solid #222;border-radius:50%;z-index:30"></div>
<div class="a" style="left:371.0px;top:254.0px;width:11px;height:11px;border:1.3px solid #222;border-radius:50%;z-index:30"></div>
<div class="a" style="left:743.5px;top:254.0px;width:11px;height:11px;border:1.3px solid #222;border-radius:50%;z-index:30"></div>
<div class="a" style="left:371.0px;top:432.0px;width:11px;height:11px;border:1.3px solid #222;border-radius:50%;z-index:30"></div>
<div class="a" style="left:557.0px;top:432.0px;width:11px;height:11px;border:1.3px solid #222;border-radius:50%;z-index:30"></div>
<div class="a" style="left:743.5px;top:432.0px;width:11px;height:11px;border:1.3px solid #222;border-radius:50%;z-index:30"></div>

<!-- ===== MAN ===== -->
<svg class="a" style="left:0;top:0;z-index:35" width="826" height="463" viewBox="0 0 826 463">
  <defs>
    <linearGradient id="shirtG" x1="0" y1="0" x2="1" y2="1">
      <stop offset="0" stop-color="#a8d3f2"/>
      <stop offset="0.6" stop-color="#9bcbee"/>
      <stop offset="1" stop-color="#8dc1e8"/>
    </linearGradient>
    <linearGradient id="skinG" x1="0" y1="0" x2="0.6" y2="1">
      <stop offset="0" stop-color="#f2d6bf"/>
      <stop offset="0.5" stop-color="#e8c3a7"/>
      <stop offset="1" stop-color="#d2a68c"/>
    </linearGradient>
    <filter id="bl1" x="-30%" y="-30%" width="160%" height="160%"><feGaussianBlur stdDeviation="2.4"/></filter>
    <filter id="bl2" x="-20%" y="-20%" width="140%" height="140%"><feGaussianBlur stdDeviation="0.6"/></filter>
    <linearGradient id="fistG" x1="0" y1="0" x2="0.3" y2="1">
      <stop offset="0" stop-color="#e8c2a6"/>
      <stop offset="1" stop-color="#d3a487"/>
    </linearGradient>
  </defs>
  <!-- shirt body -->
  <path d="M6,463 L7,440 L11,421 L17,410 L27,402 L48,392.6 L70,384.5 L72.3,373 L81,375 L107,385 L112,392 L150,389 L169,392 L195,395 L215,403 L226,416 L235,436 L241,463 Z" fill="url(#shirtG)"/>
  <!-- shirt folds -->
  <g filter="url(#bl1)">
  <path d="M10,425 Q55,410 108,433 L106,437 Q55,417 12,430 Z" fill="#6c9fd0" opacity="0.4"/>
  <path d="M28,402 Q75,412 98,448 L95,450 Q72,420 26,406 Z" fill="#6c9fd0" opacity="0.35"/>
  <path d="M158,397 Q190,414 213,463 L208,463 Q184,424 156,402 Z" fill="#6c9fd0" opacity="0.3"/>
  <path d="M193,401 Q216,428 226,463 L222,463 Q208,434 189,405 Z" fill="#6c9fd0" opacity="0.3"/>
  <path d="M40,400 Q60,395 72,386 L76,390 Q62,400 44,405 Z" fill="#b8daf4" opacity="0.6"/>
  <path d="M160,392 Q185,395 205,402 L204,406 Q184,400 160,397 Z" fill="#b0d4f0" opacity="0.6"/>
  </g>
  <!-- base skin under everything -->
  <path d="M52,292 L56,274 L80,262 L100,262 L110,268.5 L118,279 L125,291 L130,302 L136,317 L139,331 L141,341 L146,350 L155,360 L157,362 L159,372 L155,385 L147,400 L146,413 L113,413 L113,392 L107,385 L75,373 L68,354 L60,332 Z" fill="#c99c84"/>
  <!-- neck -->
  <path d="M62,338 L66,350 L70,367.5 L74,374 L81,375 L107,385 L113,392 L113,372 L106,360 L93,356 L80,362 Z" fill="#b38d78"/>
  <!-- collar -->
  <path d="M72.3,373 L81,375 L107,385 L112,391 L100,400 L87.4,410.7 L82,398 L70,384.5 Z" fill="#a3cdee"/>
  <path d="M87.4,410.7 L100,400 L112,391 L116,398 L111,420 L96,418 Z" fill="#7fb2de"/>
  <path d="M106,394 L113,392 L114,405 L109,402 Z" fill="#2e4a6a" opacity="0.8"/>
  <!-- collar/cuff outline lines -->
  <g filter="url(#bl2)" fill="none" stroke="#5a8bbd" stroke-width="1" opacity="0.8">
    <path d="M72.5,374 Q76,392 90.5,417 L112,393"/>
    <path d="M90.5,417 Q100,440 104,463"/>
    <path d="M10,422 Q50,420 80,432 Q95,440 104,450"/>
  </g>
  <path d="M110,415.5 Q130,418 148,419.5" stroke="#5e92c6" stroke-width="1.2" fill="none"/>
  <!-- ear -->
  <path d="M42,325 Q45,318 52,320 Q62,325 66,337 Q66,350 60,349.5 Q48,346 42,325 Z" fill="#deb296"/>
  <path d="M47,326 Q54,325 58,334 Q58,342 55,341 Q50,334 47,326 Z" fill="#b98a70" opacity="0.8"/>
  <!-- face -->
  <path d="M58,300 L60,287 L70,280 L89,270.7 L110,267 L121,278 L128,290 L133,301 L139,316 L142,330 L143.5,340 L130,343 L112,350 L93,356 L80,362 L68,355 L62,342 L57,325 Z" fill="url(#skinG)"/>
  <!-- forehead highlight -->
  <path d="M70,285 Q90,272 112,270 Q122,282 125,292 Q100,290 76,300 Z" fill="#f5dcc6" opacity="0.7" filter="url(#bl1)"/>
  <!-- stubble / jaw -->
  <g filter="url(#bl1)">
  <path d="M60,336 Q70,327 86,328 Q100,332 108,328 Q125,326 141,324 L143.5,340 L130,343 L112,350 L93,356 L80,362 L68,355 Z" fill="#b39584" opacity="0.6"/>
  <path d="M61,340 Q70,354 82,361 L93,357 Q76,350 68,336 Z" fill="#9f7d6b" opacity="0.55"/>
  <path d="M58,300 Q62,320 66,336 L72,334 Q66,316 64,298 Z" fill="#b08670" opacity="0.5"/>
  </g>
  <!-- hair -->
  <path d="M36.5,300 Q36,290 42,283 Q48,268 57,262 Q68,255.5 80,255.5 Q95,257 105,263 L112,268 Q100,268 89,273.5 Q78,277 72,283 Q64,289 64,298 Q64,307 69,316 L64,327 L55,320 L43,325 Q38,314 36.5,300 Z" fill="#47392f"/>
  <path d="M48,284 Q58,266 80,260 Q95,260 102,265 Q86,267 72,275 Q58,283 54,294 Z" fill="#605045" opacity="0.6" filter="url(#bl2)"/>
  <!-- eyebrows -->
  <path d="M75,307.5 Q85,298 98,297.5 L99,300.5 Q86,301.5 76.5,309.5 Z" fill="#4b3a31"/>
  <path d="M111,292.5 Q119,287.5 127.5,287.5 L128,290 Q119.5,290.5 112,295 Z" fill="#4b3a31"/>
  <!-- eyes -->
  <path d="M84,311.5 Q90,305 97.5,307 Q92,312.5 84,311.5 Z" fill="#f2ebe6"/>
  <path d="M90,308.2 Q93,306.8 95,308.3 Q93,310.5 90,309.8 Z" fill="#7a5434"/>
  <path d="M83,312.5 Q90,304.5 98.5,306.5" stroke="#5a3f33" stroke-width="1" fill="none"/>
  <path d="M117,299 Q121,295 126.5,296 Q122,300 117,299 Z" fill="#f2ebe6"/>
  <path d="M116.5,299.5 Q121,294.5 127,295.5" stroke="#5a3f33" stroke-width="1" fill="none"/>
  <path d="M82,316 Q92,319 101,310 Q97,319 85,320 Z" fill="#c9a08a" opacity="0.6"/>
  <!-- nose -->
  <g filter="url(#bl2)">
  <path d="M105,302 Q109,312 111,320 Q115,318 119,320 Q114,310 110,300 Z" fill="#f3d8c4" opacity="0.8"/>
  <path d="M116,306 Q123,316 124,321 Q122,326 116,326 Q120,320 117,312 Z" fill="#c99478" opacity="0.6"/>
  <path d="M106,320 Q107,326 113,327 Q109,323 109,319 Z" fill="#b98a72" opacity="0.6"/>
  </g>
  <path d="M110.5,323.5 Q114,326 119.5,324.5 Q115,322.5 110.5,323.5 Z" fill="#6d4a3c"/>
  <!-- mouth -->
  <path d="M106.8,340.5 Q120,336 133.8,334 Q126,340 112,343 Z" fill="#cd9484"/>
  <path d="M106.8,340.5 Q120,335.5 133.8,334" stroke="#946555" stroke-width="0.8" fill="none"/>
  <!-- hand / fist -->
  <path d="M92.8,354.5 Q98,352 104.7,355 L111,351.3 L126.3,344.8 L137,341 L144,346 L148,351 L153,357 L158.7,363.2 L160.8,371.8 L156.5,384.8 L147.9,400 L146.8,413 L112.2,413 L112.2,402 L106.8,380.5 Q108,372 104,365 Q98,359 92.8,354.5 Z" fill="url(#fistG)"/>
  <path d="M111,351.3 L126.3,344.8 L137,341 L144,346 Q149,351 152,356 Q140,353 128,356 Q118,359 112,362 Z" fill="#edcdb5" opacity="0.8"/>
  <path d="M106.8,380.5 Q122,392 147.9,400 L146.8,413 L112.2,413 L112.2,402 Z" fill="#cfa085" opacity="0.7"/>
  <g filter="url(#bl1)">
  <path d="M100,360 Q108,368 111,385 L113,410 L124,410 Q120,390 116,372 Q110,360 104,356 Z" fill="#c08d73" opacity="0.55"/>
  <path d="M140,350 Q152,356 156,370 Q150,372 142,362 Z" fill="#f2d2ba" opacity="0.6"/>
  </g>
  <path d="M113,360 Q122,352 134,350" stroke="#c4967c" stroke-width="0.8" fill="none" opacity="0.8"/>
  <path d="M92.8,354.5 Q97,352.5 101,354 Q96,356.5 92.8,355.5 Z" fill="#d8c4c4"/>
  <path d="M104,365 Q110,372 107,381" stroke="#b58a70" stroke-width="1" fill="none" opacity="0.7"/>
  <!-- cuff -->
  <path d="M108,416 L113,412 L147,413 L151,418 L153,463 L104,463 L103,440 Z" fill="#a0cdee"/>
  <path d="M108,416 L113,412 L147,413 L151,418 Q130,422 108,420 Z" fill="#73a8d6"/>
  <path d="M122,463 L126,442 Q140,432 153,434 L153,463 Z" fill="#7bb0dc" opacity="0.6"/>
  <circle cx="146" cy="436.5" r="2.6" fill="#f0f6fb"/>
  <path d="M103,440 Q90,450 82,463 L104,463 Z" fill="#6497c9" opacity="0.7"/>
  <!-- red word-cloud glyph remnants (behind? drawn here but under man parts order) -->
</svg>

<div class="a" style="left:514.2px;top:106.7px;width:32.6px;height:32.6px;border:2.9px solid #3f9a1c;border-radius:50%;z-index:31;background:#fff"></div>
<div class="t" style="left:500.5px;width:60px;text-align:center;top:118.6px;font-size:11.5px;color:#555;z-index:32;-webkit-text-stroke:0.3px #555">A</div>
<div class="a" style="left:615.1px;top:159.1px;width:34.8px;height:34.8px;border:2.9px solid #3f9a1c;border-radius:50%;z-index:31;background:#fff"></div>
<div class="t" style="left:602.5px;width:60px;text-align:center;top:172.1px;font-size:11.5px;color:#555;z-index:32;-webkit-text-stroke:0.3px #555">B</div>
<div class="a" style="left:472.8px;top:254.29999999999998px;width:34.8px;height:34.8px;border:2.9px solid #3f9a1c;border-radius:50%;z-index:31;background:#fff"></div>
<div class="t" style="left:460.2px;width:60px;text-align:center;top:267.3px;font-size:11.5px;color:#555;z-index:32;-webkit-text-stroke:0.3px #555">C</div>
<!-- ===== CLOUD ===== -->
<svg class="a" style="left:0;top:0;z-index:40" width="826" height="463" viewBox="0 0 826 463">
  <g fill="#161a22">
    <circle cx="93" cy="175" r="33.8"/>
    <circle cx="133" cy="132" r="52.3"/>
    <circle cx="203" cy="136" r="25.3"/>
    <circle cx="226.5" cy="173" r="35.3"/>
    <rect x="93" y="150" width="134" height="58.8"/>
  </g>
  <g fill="#fff">
    <circle cx="93" cy="175" r="31.2"/>
    <circle cx="133" cy="132" r="49.7"/>
    <circle cx="203" cy="136" r="22.7"/>
    <circle cx="226.5" cy="173" r="32.7"/>
    <rect x="93" y="150" width="134" height="56.2"/>
    <polygon points="93,175 133,132 203,136 226.5,173 226.5,200 93,200"/>
  </g>
  <circle cx="118.8" cy="220.4" r="10.5" fill="#fff" stroke="#161a22" stroke-width="2.6"/>
  <circle cx="107" cy="245.2" r="6" fill="#fff" stroke="#161a22" stroke-width="2.6"/>
</svg>
<div class="t" style="left:90.3px;top:146.2px;font-size:25.5px;color:#1d2230;z-index:41;transform:scaleX(1.165);-webkit-text-stroke:0.6px #1d2230">Where do I</div>
<div class="t" style="left:125.3px;top:178.3px;font-size:25.5px;color:#1d2230;z-index:41;transform:scaleX(1.145);-webkit-text-stroke:0.6px #1d2230">start?</div>

</div></body></html>
